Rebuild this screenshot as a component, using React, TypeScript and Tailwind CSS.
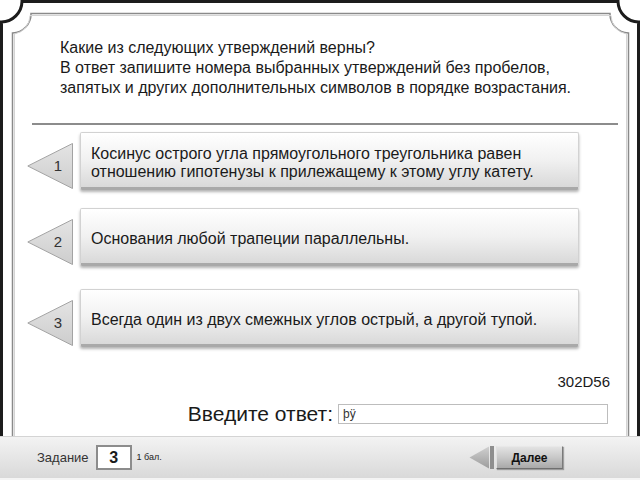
import React from "react";

const statements = [
  {
    n: 1,
    text: "Косинус острого угла прямоугольного треугольника равен отношению гипотенузы к прилежащему к этому углу катету.",
    mt: "mt-[7px]",
  },
  { n: 2, text: "Основания любой трапеции параллельны.", mt: "mt-[18px]" },
  { n: 3, text: "Всегда один из двух смежных углов острый, а другой тупой.", mt: "mt-[23px]" },
];

function Frame() {
  return (
    <svg className="absolute inset-0 pointer-events-none" width="640" height="480" viewBox="0 0 640 480">
      <path
        d="M1.5 436 V22 A21 21 0 0 0 22 1.5 H618 A21 21 0 0 0 638.5 22 V436"
        fill="none"
        stroke="#1c1c1c"
        strokeWidth="3"
      />
      <path
        d="M12.5 436 V33 A19 19 0 0 0 31 13.5 H610 A19 19 0 0 0 628.5 33 V436"
        fill="none"
        stroke="#8a8a8a"
        strokeWidth="1.5"
      />
      <path
        d="M14.5 436 V34 A19 19 0 0 0 30 15.5 H611 A19 19 0 0 0 626.5 34 V436"
        fill="none"
        stroke="#d4d4d4"
        strokeWidth="1"
      />
    </svg>
  );
}

function Marker({ n }: { n: number }) {
  return (
    <div className="relative w-[46px] h-[46px] self-end mb-[1px] flex items-center justify-end pr-[11px]">
      <svg className="absolute inset-0" width="46" height="46" viewBox="0 0 46 46">
        <defs>
          <linearGradient id={`tri${n}`} x1="0" y1="0" x2="0" y2="1">
            <stop offset="0" stopColor="#e4e4e4" />
            <stop offset="1" stopColor="#cdcdcd" />
          </linearGradient>
        </defs>
        <polygon points="45.5,0.5 45.5,45.5 0.8,23" fill={`url(#tri${n})`} stroke="#a3a3a3" strokeWidth="1" />
      </svg>
      <span className="relative text-[15px] text-[#333]">{n}</span>
    </div>
  );
}

export default function App() {
  return (
    <div className="relative w-[640px] h-[480px] bg-white overflow-hidden font-['Liberation_Sans',Arial,sans-serif] text-[#1a1a1a]">
      <Frame />
      <div className="relative flex flex-col h-full">
        <div className="h-[436px] flex flex-col">
          <div className="pt-[38px] pl-[60px] text-[16px] leading-[20px]">
            <p>Какие из следующих утверждений верны?</p>
            <p>В ответ запишите номера выбранных утверждений без пробелов,</p>
            <p>запятых и других дополнительных символов в порядке возрастания.</p>
          </div>

          <div className="mt-[25px] ml-[32px] mr-[22px] h-[2px] bg-[#8c8c8c]" />

          {statements.map((s) => (
            <div key={s.n} className={`${s.mt} flex pl-[27px] gap-[7px]`}>
              <Marker n={s.n} />
              <div className="w-[499px] h-[58px] flex items-center pl-[10px] pt-[5px] pr-[40px] text-[16px] leading-[18px] rounded-[2px] border border-[#d2d2d2] border-b-[3px] border-b-[#a9a9a9] bg-gradient-to-b from-white via-[#f1f1f1] to-[#d9d9d9] shadow-[0_2px_3px_rgba(0,0,0,0.3)]">
                <p>{s.text}</p>
              </div>
            </div>
          ))}

          <div className="mt-[25px] pr-[30px] text-right text-[15px] leading-[20px]">302D56</div>

          <div className="mt-[10px] flex items-center justify-end pr-[32px]">
            <span className="text-[21px] leading-[24px]">Введите ответ:</span>
            <div className="ml-[5px] w-[270px] h-[20px] border border-[#bdbdbd] bg-white flex items-center pl-[4px] text-[12px] text-[#333]">
              þÿ
            </div>
          </div>
        </div>

        <div className="h-[44px] flex items-center border-t border-[#d4d4d4] border-b-2 border-b-[#f4f4f4] bg-gradient-to-b from-[#f3f3f3] to-[#d9d9d9]">
          <span className="ml-[37px] text-[13px] text-[#333]">Задание</span>
          <div className="ml-[7px] w-[36px] h-[25px] border-2 border-[#8c8c8c] bg-white flex items-center justify-center text-[16px] font-bold">
            3
          </div>
          <span className="ml-[5px] text-[9px] text-[#222]">1 бал.</span>

          <div className="ml-auto mr-[77px] flex items-center">
            <svg width="26" height="23" viewBox="0 0 26 23">
              <defs>
                <linearGradient id="arr" x1="0" y1="0" x2="0" y2="1">
                  <stop offset="0" stopColor="#d0d0d0" />
                  <stop offset="1" stopColor="#9c9c9c" />
                </linearGradient>
              </defs>
              <polygon points="20,0.5 20,22.5 0.5,11.5" fill="url(#arr)" />
              <rect x="21" y="0" width="4" height="23" fill="#8e8e8e" />
            </svg>
            <div className="ml-[1px] w-[67px] h-[23px] flex items-center justify-center text-[12px] font-bold text-[#111] border border-t-[#e8e8e8] border-l-[#e0e0e0] border-r-[#7a7a7a] border-b-[#6f6f6f] bg-gradient-to-b from-[#e2e2e2] via-[#c8c8c8] to-[#a9a9a9] shadow-[1px_1px_1px_rgba(0,0,0,0.3)]">
              Далее
            </div>
          </div>
        </div>
      </div>
    </div>
  );
}
